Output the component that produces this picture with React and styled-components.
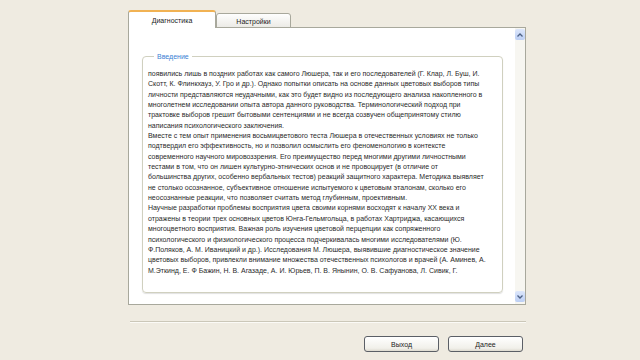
import React from 'react';
import styled, { createGlobalStyle } from 'styled-components';

const Global = createGlobalStyle`
    html, body {
        margin: 0;
        padding: 0;
        background: #efebe1;
    }
    body {
        font-family: "Liberation Sans", Arial, sans-serif;
        width: 640px;
        height: 360px;
        overflow: hidden;
    }
`;

const Page = styled.div`
    width: 398px;
    padding: 10px 0 0 128px;
`;

const TabBar = styled.div`
    display: flex;
    align-items: flex-end;
    height: 18px;
    position: relative;
    z-index: 1;
    margin-bottom: -1px;
`;

const Tab = styled.div`
    box-sizing: border-box;
    width: ${p => p.w}px;
    height: ${p => (p.active ? 18 : 15)}px;
    display: flex;
    align-items: center;
    justify-content: center;
    font-size: 7px;
    color: #222;
    border: 1px solid #a8a89c;
    border-bottom: ${p => (p.active ? 'none' : '1px solid #a8a89c')};
    border-top: ${p => (p.active ? '2px solid #f1b253' : '1px solid #a8a89c')};
    border-radius: 3px 3px 0 0;
    background: ${p => (p.active ? '#fff' : 'linear-gradient(#fefefe, #ecebe6)')};
    padding-top: ${p => (p.active ? 0 : 1)}px;
`;

const Panel = styled.div`
    box-sizing: border-box;
    height: 278px;
    display: flex;
    background: #fff;
    border: 1px solid #a8a89c;
`;

const Content = styled.div`
    flex: 1;
    padding: 25px 12px 0 13px;
`;

const Group = styled.fieldset`
    margin: 0;
    height: 240px;
    box-sizing: border-box;
    border: 1px solid #d0d0bf;
    border-radius: 4px;
    padding: 9px 0 0 5px;
    box-shadow: 0 1px 1px rgba(0, 0, 0, 0.12);
`;

const Legend = styled.legend`
    font-size: 7px;
    color: #3d7fd4;
    padding: 0 3px;
    margin-left: 6px;
`;

const Line = styled.div`
    font-size: 7px;
    line-height: 10.35px;
    color: #2a2a2a;
    white-space: nowrap;
`;

const Scrollbar = styled.div`
    width: 10px;
    display: flex;
    flex-direction: column;
    justify-content: space-between;
    background: #f7f6f1;
    padding: 1px 0 2px;
`;

const Arrow = styled.div`
    width: 10px;
    height: 11px;
    border-radius: 2px;
    background: linear-gradient(#dde7fb, #bccff5);
    display: flex;
    align-items: center;
    justify-content: center;
`;

const Separator = styled.div`
    margin: 16px 0 0 2px;
    height: 1px;
    background: #cbc7b8;
    border-bottom: 1px solid #fbfaf6;
`;

const Buttons = styled.div`
    display: flex;
    justify-content: flex-end;
    gap: 9px;
    padding: 13px 3px 0 0;
`;

const Button = styled.button`
    width: 75px;
    height: 16px;
    font-family: inherit;
    font-size: 7px;
    color: #222;
    border: 1px solid #5b5f66;
    border-radius: 3px;
    background: linear-gradient(#ffffff, #f1f0ea 80%, #dedbd0);
    padding: 0;
`;

const lines = [
    'появились лишь в поздних работах как самого Люшера, так и его последователей (Г. Клар, Л. Буш, И.',
    'Скотт, К. Флинкхауз, У. Гро и др.). Однако попытки описать на основе данных цветовых выборов типы',
    'личности представляются неудачными, как это будет видно из последующего анализа накопленного в',
    'многолетнем исследовании опыта автора данного руководства. Терминологический подход при',
    'трактовке выборов грешит бытовыми сентенциями и не всегда созвучен общепринятому стилю',
    'написания психологического заключения.',
    'Вместе с тем опыт применения восьмицветового теста Люшера в отечественных условиях не только',
    'подтвердил его эффективность, но и позволил осмыслить его феноменологию в контексте',
    'современного научного мировоззрения. Его преимущество перед многими другими личностными',
    'тестами в том, что он лишен культурно-этнических основ и не провоцирует (в отличие от',
    'большинства других, особенно вербальных тестов) реакций защитного характера. Методика выявляет',
    'не столько осознанное, субъективное отношение испытуемого к цветовым эталонам, сколько его',
    'неосознанные реакции, что позволяет считать метод глубинным, проективным.',
    'Научные разработки проблемы восприятия цвета своими корнями восходят к началу XX века и',
    'отражены в теории трех основных цветов Юнга-Гельмгольца, в работах Хартриджа, касающихся',
    'многоцветного восприятия. Важная роль изучения цветовой перцепции как сопряженного',
    'психологического и физиологического процесса подчеркивалась многими исследователями (Ю.',
    'Ф.Поляков, А. М. Иваницкий и др.). Исследования М. Люшера, выявившие диагностическое значение',
    'цветовых выборов, привлекли внимание множества отечественных психологов и врачей (А. Аминев, А.',
    'М.Эткинд, Е. Ф Бажин, Н. В. Агазаде, А. И. Юрьев, П. В. Янынин, О. В. Сафуанова, Л. Сивик, Г.',
];

const Chevron = ({ up }) => (
    <svg width="6" height="4" viewBox="0 0 6 4">
        <path d={up ? 'M0.5 3.5 L3 1 L5.5 3.5' : 'M0.5 0.5 L3 3 L5.5 0.5'} fill="none" stroke="#4d6185" strokeWidth="1.3" />
    </svg>
);

export default function App() {
    return (
        <Page>
            <Global />
            <TabBar>
                <Tab w={88} active>Диагностика</Tab>
                <Tab w={75}>Настройки</Tab>
            </TabBar>
            <Panel>
                <Content>
                    <Group>
                        <Legend>Введение</Legend>
                        {lines.map((l, i) => (
                            <Line key={i}>{l}</Line>
                        ))}
                    </Group>
                </Content>
                <Scrollbar>
                    <Arrow><Chevron up /></Arrow>
                    <Arrow><Chevron /></Arrow>
                </Scrollbar>
            </Panel>
            <Separator />
            <Buttons>
                <Button>Выход</Button>
                <Button>Далее</Button>
            </Buttons>
        </Page>
    );
}
